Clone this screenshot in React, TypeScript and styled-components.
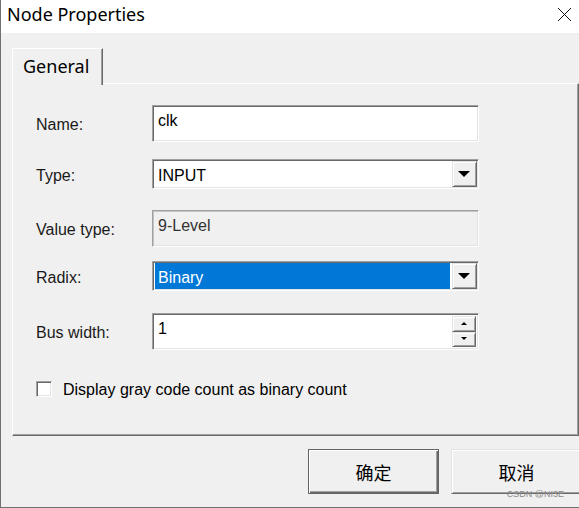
import styled, { createGlobalStyle } from "styled-components";

const GlobalStyle = createGlobalStyle`
  html, body {
    margin: 0;
    padding: 0;
    background: #f0f0f0;
  }
  * {
    box-sizing: border-box;
  }
`;

const Window = styled.div`
  width: 579px;
  height: 508px;
  overflow: hidden;
  position: relative;
  background: #f0f0f0;
  border-left: 1px solid #707070;
  border-bottom: 1px solid #707070;
  font-family: "Liberation Sans", Arial, sans-serif;
  font-size: 16px;
  color: #000;
`;

const TitleBar = styled.div`
  height: 33px;
  background: #ffffff;
  display: flex;
  align-items: center;
  justify-content: space-between;
  padding: 0 7px 5px 6px;
`;

const Title = styled.span`
  font-family: "Noto Sans", "Open Sans", sans-serif;
  font-size: 18px;
  line-height: 1;
`;

const CloseIcon = () => (
  <svg width="15" height="15" viewBox="0 0 15 15">
    <path d="M1 1 L14 14 M14 1 L1 14" stroke="#111" strokeWidth="1" fill="none" />
  </svg>
);

const Content = styled.div`
  padding: 15px 0 0 11px;
`;

const TabStrip = styled.div`
  display: flex;
  height: 36px;
  position: relative;
  z-index: 1;
  margin-bottom: -1px;
`;

const Tab = styled.div`
  width: 91px;
  height: 37px;
  background: #f0f0f0;
  border-top: 1px solid #ffffff;
  border-left: 1px solid #ffffff;
  border-right: 1px solid #696969;
  box-shadow: inset -1px 0 #a0a0a0;
  padding: 5px 0 0 10px;
  font-family: "Noto Sans", "Open Sans", sans-serif;
  font-size: 18px;
  line-height: 24px;
`;

const Panel = styled.div`
  width: 567px;
  height: 353px;
  border-top: 1px solid #ffffff;
  border-left: 1px solid #ffffff;
  border-right: 1px solid #696969;
  border-bottom: 1px solid #696969;
  box-shadow: inset -1px -1px #a0a0a0;
  padding: 21px 0 0 23px;
  display: flex;
  flex-direction: column;
`;

const Row = styled.div<{ $mt?: number; $h: number }>`
  display: flex;
  align-items: center;
  height: ${(p) => p.$h}px;
  margin-top: ${(p) => p.$mt ?? 0}px;
`;

const Label = styled.div`
  width: 116px;
  flex-shrink: 0;
  padding-top: 3px;
  color: #1a1a1a;
`;

const Field = styled.div<{ $h: number; $disabled?: boolean; $top?: boolean }>`
  width: 327px;
  height: ${(p) => p.$h}px;
  display: flex;
  align-items: ${(p) => (p.$top ? "flex-start" : "center")};
  position: relative;
  background: ${(p) => (p.$disabled ? "#f0f0f0" : "#ffffff")};
  border: 1px solid;
  border-color: #a0a0a0 #ffffff #ffffff #a0a0a0;
  box-shadow: ${(p) =>
    p.$disabled
      ? "inset 1px 1px #c4c4c4, inset -1px -1px #e3e3e3"
      : "inset 1px 1px #696969, inset -1px -1px #e3e3e3"};
  padding: ${(p) => (p.$top ? "6px 0 0 5px" : "0 0 0 2px")};
  line-height: 18px;
  color: ${(p) => (p.$disabled ? "#333" : "#000")};
`;

const ComboText = styled.div<{ $selected?: boolean }>`
  flex: 1;
  height: 26px;
  margin-right: 2px;
  display: flex;
  align-items: center;
  padding: 3px 0 0 3px;
  background: ${(p) => (p.$selected ? "#0078d7" : "transparent")};
  color: ${(p) => (p.$selected ? "#ffffff" : "#000")};
`;

const RaisedButton = styled.div`
  background: #f0f0f0;
  border: 1px solid;
  border-color: #e3e3e3 #696969 #696969 #e3e3e3;
  box-shadow: inset 1px 1px #ffffff, inset -1px -1px #a0a0a0;
  display: flex;
  align-items: center;
  justify-content: center;
`;

const DropButton = styled(RaisedButton)`
  width: 25px;
  height: 26px;
  margin-right: 1px;
`;

const SpinColumn = styled.div`
  position: absolute;
  right: 2px;
  top: 2px;
  bottom: 2px;
  width: 24px;
  display: flex;
  flex-direction: column;
`;

const SpinButton = styled(RaisedButton)`
  flex: 1;
`;

const Arrow = ({ up, size }: { up?: boolean; size: number }) => (
  <svg width={size * 2 + 1} height={size + 1} viewBox={`0 0 ${size * 2 + 1} ${size + 1}`}>
    <polygon
      points={
        up
          ? `0,${size} ${size * 2},${size} ${size},0`
          : `0,0 ${size * 2},0 ${size},${size}`
      }
      fill="#000"
    />
  </svg>
);

const CheckRow = styled.label`
  display: flex;
  align-items: center;
  margin-top: 30px;
  height: 18px;
  gap: 11px;
  padding-top: 2px;
`;

const CheckBox = styled.span`
  display: block;
  flex-shrink: 0;
  width: 16px;
  height: 16px;
  margin-top: -2px;
  background: #ffffff;
  border: 1px solid;
  border-color: #a0a0a0 #ffffff #ffffff #a0a0a0;
  box-shadow: inset 1px 1px #696969, inset -1px -1px #e3e3e3;
`;

const Footer = styled.div`
  display: flex;
  gap: 12px;
  padding-left: 296px;
  margin-top: 13px;
`;

const DialogButton = styled.div<{ $default?: boolean }>`
  width: 131px;
  height: 45px;
  flex-shrink: 0;
  display: flex;
  align-items: center;
  justify-content: center;
  background: #f0f0f0;
  font-family: "Liberation Sans", "Noto Sans CJK SC", sans-serif;
  font-size: 18px;
  border: 1px solid;
  border-color: ${(p) =>
    p.$default ? "#646464" : "#e3e3e3 #696969 #696969 #e3e3e3"};
  box-shadow: ${(p) =>
    p.$default
      ? "inset 1px 1px #ffffff, inset -1px -1px #696969, inset -2px -2px #a0a0a0"
      : "inset 1px 1px #ffffff, inset -1px -1px #a0a0a0"};
`;

const Watermark = styled.div`
  position: absolute;
  right: 15px;
  bottom: 8px;
  font-family: "Liberation Sans", Arial, sans-serif;
  font-size: 9px;
  color: #8a8a8a;
`;

export default function App() {
  return (
    <>
      <GlobalStyle />
      <Window>
        <TitleBar>
          <Title>Node Properties</Title>
          <CloseIcon />
        </TitleBar>
        <Content>
          <TabStrip>
            <Tab>General</Tab>
          </TabStrip>
          <Panel>
            <Row $h={37}>
              <Label>Name:</Label>
              <Field $h={37} $top>
                clk
              </Field>
            </Row>
            <Row $h={30} $mt={17}>
              <Label>Type:</Label>
              <Field $h={30}>
                <ComboText>INPUT</ComboText>
                <DropButton>
                  <Arrow size={6} />
                </DropButton>
              </Field>
            </Row>
            <Row $h={37} $mt={21}>
              <Label>Value type:</Label>
              <Field $h={37} $top $disabled>
                9-Level
              </Field>
            </Row>
            <Row $h={30} $mt={14}>
              <Label>Radix:</Label>
              <Field $h={30}>
                <ComboText $selected>Binary</ComboText>
                <DropButton>
                  <Arrow size={6} />
                </DropButton>
              </Field>
            </Row>
            <Row $h={37} $mt={22}>
              <Label>Bus width:</Label>
              <Field $h={37} $top>
                1
                <SpinColumn>
                  <SpinButton>
                    <Arrow up size={3} />
                  </SpinButton>
                  <SpinButton>
                    <Arrow size={3} />
                  </SpinButton>
                </SpinColumn>
              </Field>
            </Row>
            <CheckRow>
              <CheckBox />
              <span>Display gray code count as binary count</span>
            </CheckRow>
          </Panel>
          <Footer>
            <DialogButton $default>确定</DialogButton>
            <DialogButton>取消</DialogButton>
          </Footer>
        </Content>
        <Watermark>CSDN @NI3E</Watermark>
      </Window>
    </>
  );
}
